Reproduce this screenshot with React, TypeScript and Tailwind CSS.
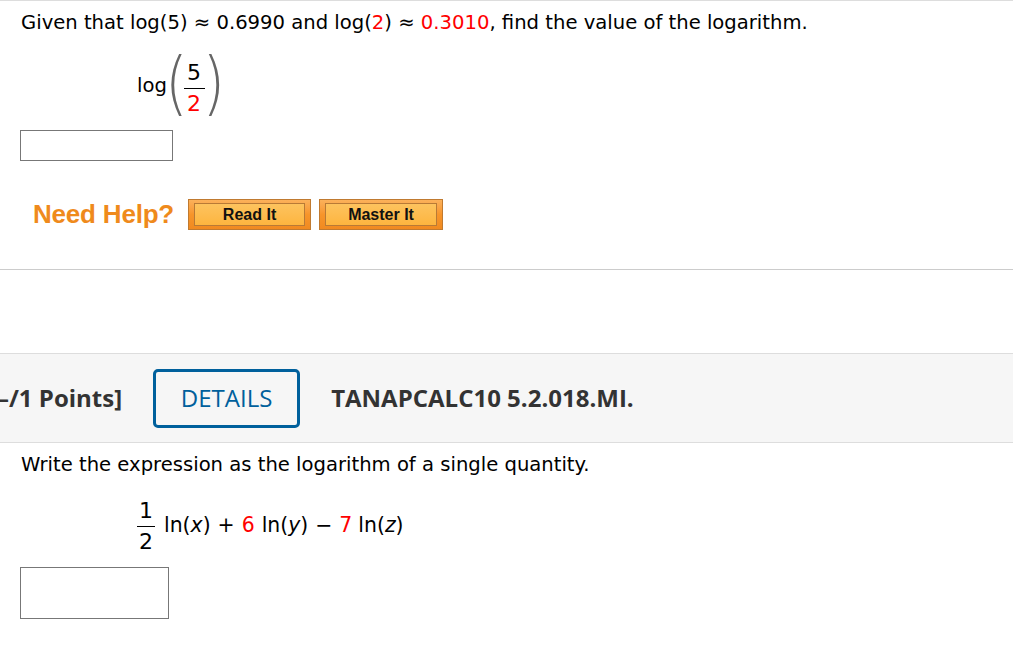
import React from "react";

const verdana = { fontFamily: '"DejaVu Sans", Verdana, sans-serif' };

function OrangeButton({ label, w }: { label: string; w: number }) {
  return (
    <div className="h-[31px] border border-[#c07a30] bg-gradient-to-b from-[#fbb15a] via-[#f7952a] to-[#f08a20] p-[3px] pl-[5px] pr-[5px] box-border" style={{ width: w }}>
      <div className="h-full w-full border border-[#b87a36] bg-gradient-to-b from-[#fdc35e] to-[#fdb53e] flex items-center justify-center">
        <span className="text-[16px] font-bold text-[#111]" style={{ fontFamily: '"Liberation Sans", Arial, sans-serif' }}>{label}</span>
      </div>
    </div>
  );
}

export default function App() {
  return (
    <div className="w-[1013px] h-[668px] bg-white overflow-hidden flex flex-col text-black" style={verdana}>
      <div className="border-t border-[#dddddd]" />
      {/* line 1 */}
      <div className="h-[43px] flex items-center pl-[21px] text-[19.6px] whitespace-nowrap">
        <span className="mt-[1px]">
          Given that log(5) ≈ 0.6990 and log(<span className="text-[#ff0000]">2</span>) ≈ <span className="text-[#ff0000]">0.3010</span>, find the value of the logarithm.
        </span>
      </div>
      {/* log(5/2) */}
      <div className="mt-[13px] h-[60px] flex items-center pl-[137px] text-[19.6px]">
        <span className="mt-[-2px]">log</span>
        <span className="text-[58px] font-[200] text-[#666] leading-none mt-[-8px] scale-y-[1.2] inline-block ml-[-2px] mr-[-5px]">(</span>
        <span className="flex flex-col items-center mx-[1px] mt-[2px] text-[22px]">
          <span className="leading-[26px]">5</span>
          <span className="w-[21px] border-t border-black my-[2px]" />
          <span className="leading-[26px] text-[#ff0000]">2</span>
        </span>
        <span className="text-[58px] font-[200] text-[#666] leading-none mt-[-8px] scale-y-[1.2] inline-block ml-[-3px]">)</span>
      </div>
      {/* input 1 */}
      <div className="mt-[13px] ml-[20px] w-[153px] h-[31px] border border-[#777] bg-white" />
      {/* need help */}
      <div className="mt-[38px] h-[31px] flex items-center">
        <span className="ml-[33px] text-[26px] font-bold text-[#ef8a1c] tracking-[-0.2px]" style={{ fontFamily: '"Liberation Sans", Arial, sans-serif' }}>Need Help?</span>
        <div className="ml-[14px]"><OrangeButton label="Read It" w={123} /></div>
        <div className="ml-[8px]"><OrangeButton label="Master It" w={124} /></div>
      </div>
      <div className="mt-[39px] border-t border-[#cccccc]" />
      {/* header band */}
      <div className="mt-[83px] h-[90px] bg-[#f6f6f6] border-t border-b border-[#dddddd] flex items-center text-[#333]" style={{ fontFamily: '"Open Sans", sans-serif' }}>
        <span className="ml-[-11px] text-[24px] font-bold whitespace-nowrap">[–/1 Points]</span>
        <div className="ml-[31px] w-[147px] h-[59px] border-[3px] border-[#00609c] rounded-[5px] flex items-center justify-center">
          <span className="text-[24px] text-[#00609c]">DETAILS</span>
        </div>
        <span className="ml-[31px] text-[24px] font-bold whitespace-nowrap">TANAPCALC10 5.2.018.MI.</span>
      </div>
      {/* line 2 */}
      <div className="h-[44px] flex items-center pl-[21px] text-[19.6px] whitespace-nowrap">
        Write the expression as the logarithm of a single quantity.
      </div>
      <div className="mt-[9px] h-[58px] flex items-center pl-[137px] text-[20.4px] whitespace-nowrap">
        <span className="flex flex-col items-center text-[22px] mt-[2px]">
          <span className="leading-[26px]">1</span>
          <span className="w-[18px] border-t border-black my-[2px]" />
          <span className="leading-[26px]">2</span>
        </span>
        <span className="ml-[9px] flex items-center">
          <span>ln(<i>x</i>)</span>
          <span className="mx-[7px]">+</span>
          <span className="text-[#ff0000]">6</span>
          <span className="ml-[7px]">ln(<i>y</i>)</span>
          <span className="mx-[7px]">−</span>
          <span className="text-[#ff0000]">7</span>
          <span className="ml-[6px]">ln(<i>z</i>)</span>
        </span>
      </div>
      <div className="mt-[13px] ml-[20px] w-[149px] h-[52px] border border-[#777] bg-white" />
    </div>
  );
}
